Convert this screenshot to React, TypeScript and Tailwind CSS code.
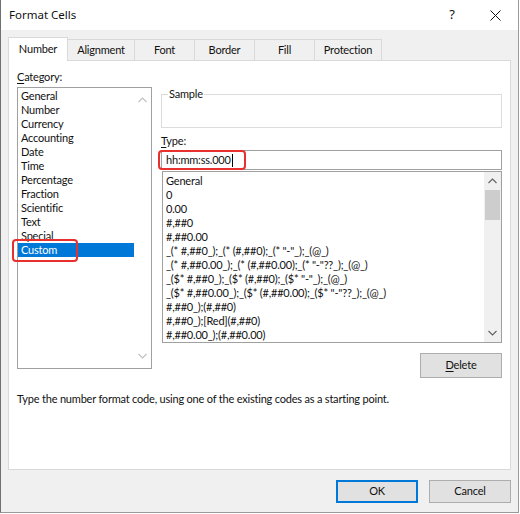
import React from 'react';

const categories = ['General', 'Number', 'Currency', 'Accounting', 'Date', 'Time', 'Percentage', 'Fraction', 'Scientific', 'Text', 'Special', 'Custom'];

const formats = [
  'General',
  '0',
  '0.00',
  '#,##0',
  '#,##0.00',
  '_(* #,##0_);_(* (#,##0);_(* "-"_);_(@_)',
  '_(* #,##0.00_);_(* (#,##0.00);_(* "-"??_);_(@_)',
  '_($* #,##0_);_($* (#,##0);_($* "-"_);_(@_)',
  '_($* #,##0.00_);_($* (#,##0.00);_($* "-"??_);_(@_)',
  '#,##0_);(#,##0)',
  '#,##0_);[Red](#,##0)',
  '#,##0.00_);(#,##0.00)',
];

const tabs = [
  { label: 'Number', w: 'w-[60px]' },
  { label: 'Alignment', w: 'w-[67px]' },
  { label: 'Font', w: 'w-[60px]' },
  { label: 'Border', w: 'w-[60px]' },
  { label: 'Fill', w: 'w-[60px]' },
  { label: 'Protection', w: 'w-[67px]' },
];

function Chevron({ up, color }: { up?: boolean; color: string }) {
  return (
    <svg width="9" height="6" viewBox="0 0 9 6" fill="none">
      <polyline points={up ? '0.5,5 4.5,1 8.5,5' : '0.5,1 4.5,5 8.5,1'} stroke={color} strokeWidth="1.1" />
    </svg>
  );
}

export default function App() {
  return (
    <div className="relative w-[520px] h-[514px] bg-white overflow-hidden text-[11px] tracking-[-0.2px] text-[#111] font-['Segoe_UI','Lato',sans-serif]">
      <div className="w-[519px] h-[513px] flex flex-col bg-[#f0f0f0] border-l border-l-[#707070] border-r border-r-[#9a9a9a] border-b border-b-[#9a9a9a]">
        {/* title bar */}
        <div className="h-[30px] bg-white flex items-center shrink-0 tracking-normal">
          <span className="pl-[8px] text-[11.5px] font-['Segoe_UI','Noto_Sans',sans-serif]">Format Cells</span>
          <span className="ml-auto w-[40px] text-center text-[13px] font-['Segoe_UI','Noto_Sans',sans-serif]">?</span>
          <span className="w-[46px] flex justify-center">
            <svg width="11" height="11" viewBox="0 0 11 11">
              <path d="M0.5 0.5 L10.5 10.5 M10.5 0.5 L0.5 10.5" stroke="#111" strokeWidth="1" />
            </svg>
          </span>
        </div>

        <div className="flex-1 flex flex-col px-[7px] pt-[7px]">
          {/* tabs */}
          <div className="h-[23px] flex items-end">
            {tabs.map((t, i) =>
              i === 0 ? (
                <div key={t.label} className={`${t.w} h-[24px] -mb-[1px] relative z-10 bg-white border-l border-t border-r border-[#d9d9d9] flex items-center justify-center pb-[1px]`}>
                  {t.label}
                </div>
              ) : (
                <div key={t.label} className={`${t.w} h-[21px] border-t border-r border-[#d9d9d9] flex items-center justify-center`}>
                  {t.label}
                </div>
              )
            )}
          </div>

          {/* panel */}
          <div className="w-[503px] h-[410px] bg-white border border-[#d9d9d9] px-[8px] flex flex-col">
            <div className="flex">
              <div className="w-[135px] pt-[8px]">
                <div className="h-[16px] leading-[16px]"><span className="underline underline-offset-2">C</span>ategory:</div>
                <div className="mt-[2px] h-[282px] border border-[#a0a0a0] flex">
                  <div className="flex-1 pt-[1px]">
                    {categories.map((c) => (
                      <div key={c} className={`h-[14px] leading-[14px] pl-[3px] ${c === 'Custom' ? 'bg-[#0078d7] text-white' : ''}`}>{c}</div>
                    ))}
                  </div>
                  <div className="w-[17px] flex flex-col items-center justify-between py-[9px]">
                    <Chevron up color="#c0c0c0" />
                    <Chevron color="#c0c0c0" />
                  </div>
                </div>
              </div>

              <div className="ml-[9px] w-[341px] flex flex-col">
                <div className="mt-[33px] h-[34px] border border-[#dcdcdc] relative">
                  <span className="absolute -top-[9px] left-[6px] bg-white px-[1px] leading-[16px]">Sample</span>
                </div>
                <div className="mt-[5px] h-[16px] leading-[16px]"><span className="underline underline-offset-2">T</span>ype:</div>
                <div className="mt-[1px] h-[20px] border border-[#a0a0a0] flex items-center pl-[4px]">
                  <span>hh:mm:ss.000</span>
                  <span className="w-px h-[13px] bg-black ml-px" />
                </div>
                <div className="mt-[1px] ml-[1px] h-[172px] border border-[#a0a0a0] flex overflow-hidden">
                  <div className="flex-1 pt-[2px] pl-[3px] overflow-hidden">
                    {formats.map((f, i) => (
                      <div key={i} className="h-[14px] leading-[14px] whitespace-nowrap">{f}</div>
                    ))}
                  </div>
                  <div className="w-[17px] bg-[#f0f0f0] flex flex-col items-center">
                    <div className="h-[18px] flex items-center justify-center"><Chevron up color="#606060" /></div>
                    <div className="w-[15px] h-[30px] bg-[#cdcdcd]" />
                    <div className="flex-1" />
                    <div className="h-[18px] flex items-center justify-center"><Chevron color="#606060" /></div>
                  </div>
                </div>
                <div className="mt-[10px] self-end w-[82px] h-[25px] bg-[#e1e1e1] border border-[#adadad] flex items-center justify-center">
                  <span><span className="underline underline-offset-2">D</span>elete</span>
                </div>
              </div>
            </div>
            <div className="mt-[13px] h-[16px] leading-[16px]">
              Type the number format code, using one of the existing codes as a starting point.
            </div>
          </div>

          {/* buttons */}
          <div className="mt-[10px] flex justify-end gap-[11px]">
            <div className="w-[82px] h-[23px] bg-[#e1e1e1] border-2 border-[#0078d7] flex items-center justify-center">OK</div>
            <div className="w-[82px] h-[23px] bg-[#e1e1e1] border border-[#adadad] flex items-center justify-center">Cancel</div>
          </div>
        </div>
      </div>

      {/* red annotation boxes */}
      <div className="absolute left-[12px] top-[239px] w-[66px] h-[23px] border-2 border-[#e8312f] rounded-[4px]" />
      <div className="absolute left-[158px] top-[150px] w-[88px] h-[20px] border-2 border-[#e8312f] rounded-[4px]" />
    </div>
  );
}
